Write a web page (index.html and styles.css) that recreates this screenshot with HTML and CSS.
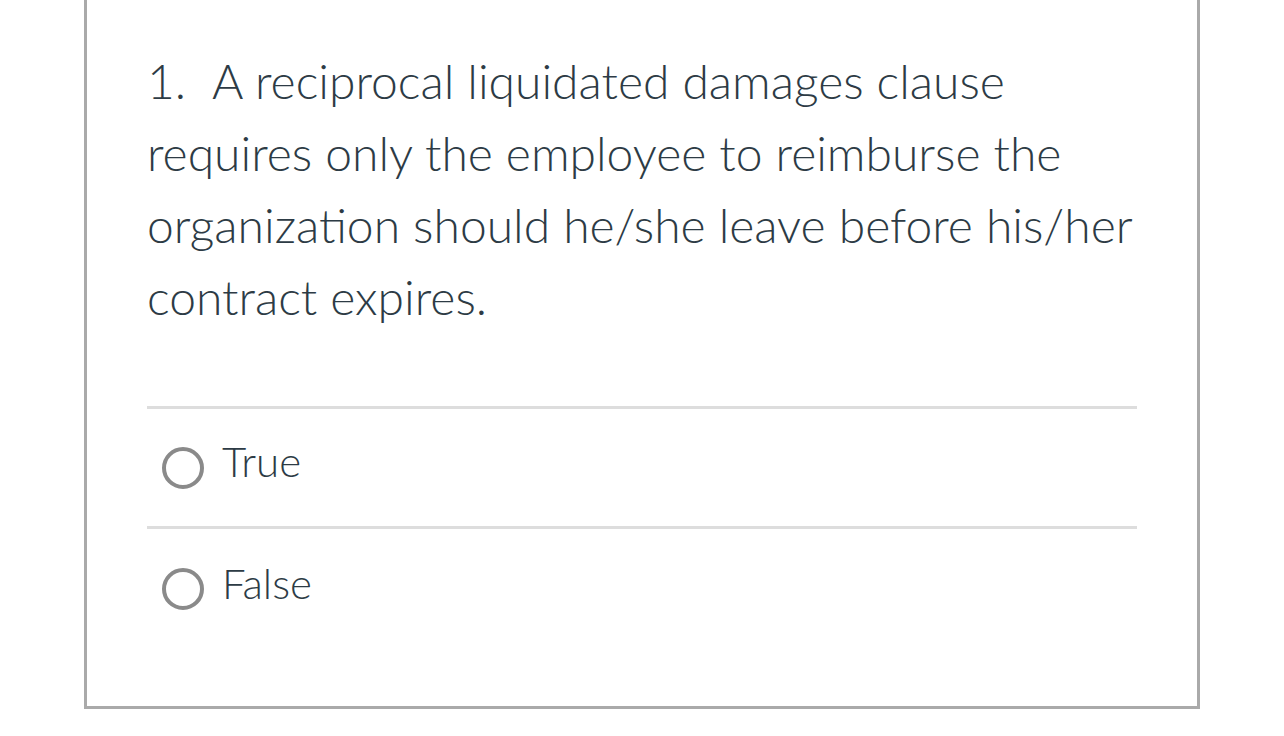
FILE: index.html
```html
<!DOCTYPE html>
<html>
<head>
<meta charset="utf-8">
<link rel="stylesheet" href="styles.css">
</head>
<body>
<div class="card">
  <p class="question"><span class="qnum">1.</span><span class="qtext">A reciprocal liquidated damages clause requires only the employee to reimburse the organization should he/she leave before his/her contract expires.</span></p>
  <div class="answers">
    <label class="option"><span class="radio"></span><span class="label">True</span></label>
    <label class="option last"><span class="radio"></span><span class="label">False</span></label>
  </div>
</div>
</body>
</html>
```

FILE: styles.css
```css
html, body {
  margin: 0;
  padding: 0;
  background: #ffffff;
}

body {
  font-family: Lato, "Open Sans", sans-serif;
  color: #2d3b45;
}

.card {
  margin-left: 84px;
  width: 1116px;
  box-sizing: border-box;
  border: 3px solid #aaaaaa;
  border-top: none;
  padding: 45px 60px 57px 60px;
  background: #fff;
}

.question {
  margin: 0;
  font-size: 48px;
  line-height: 72px;
  font-weight: 300;
}

.qnum {
  display: inline-block;
  margin-right: 26px;
}

.answers {
  margin-top: 73px;
  border-top: 3px solid #dddddd;
}

.option {
  display: flex;
  align-items: center;
  height: 120px;
  padding-left: 15px;
  border-bottom: 3px solid #dddddd;
  box-sizing: border-box;
}

.option.last {
  height: 120px;
  border-bottom: none;
}

.radio {
  width: 42px;
  height: 42px;
  box-sizing: border-box;
  border: 4.5px solid #8a8a8a;
  border-radius: 50%;
  flex: none;
}

.label {
  margin-left: 18px;
  font-size: 42px;
  line-height: 60px;
  margin-top: -13px;
  font-weight: 300;
}
```
